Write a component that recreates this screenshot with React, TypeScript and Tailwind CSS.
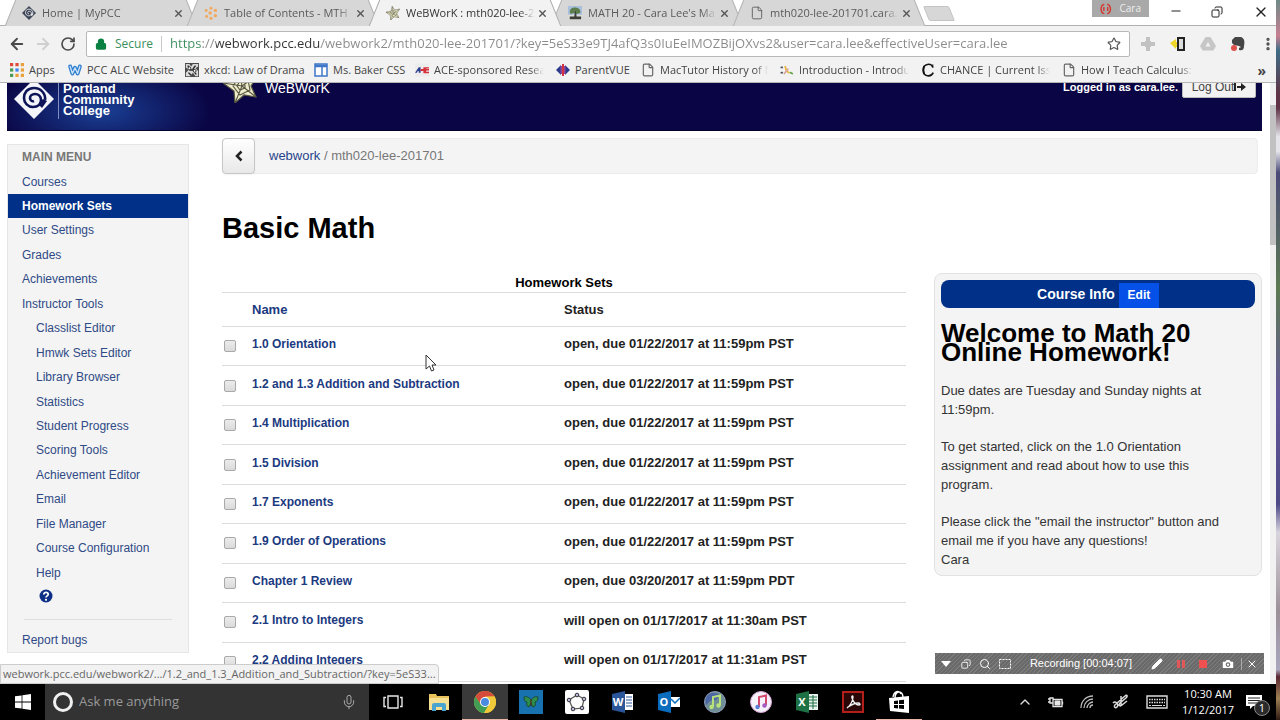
import type { ReactNode } from 'react'
import {
  ArrowLeft,
  ArrowRight,
  Camera,
  ChevronUp,
  Copy,
  File,
  Lock,
  Mic,
  Minus,
  MoreVertical,
  Pencil,
  RotateCw,
  Search,
  Star,
  X,
} from 'lucide-react'

const topMenu = ['Courses', 'Homework Sets', 'User Settings', 'Grades', 'Achievements', 'Instructor Tools']

const toolsMenu = [
  'Classlist Editor',
  'Hmwk Sets Editor',
  'Library Browser',
  'Statistics',
  'Student Progress',
  'Scoring Tools',
  'Achievement Editor',
  'Email',
  'File Manager',
  'Course Configuration',
  'Help',
]

const homeworkSets = [
  { name: '1.0 Orientation', status: 'open, due 01/22/2017 at 11:59pm PST' },
  { name: '1.2 and 1.3 Addition and Subtraction', status: 'open, due 01/22/2017 at 11:59pm PST' },
  { name: '1.4 Multiplication', status: 'open, due 01/22/2017 at 11:59pm PST' },
  { name: '1.5 Division', status: 'open, due 01/22/2017 at 11:59pm PST' },
  { name: '1.7 Exponents', status: 'open, due 01/22/2017 at 11:59pm PST' },
  { name: '1.9 Order of Operations', status: 'open, due 01/22/2017 at 11:59pm PST' },
  { name: 'Chapter 1 Review', status: 'open, due 03/20/2017 at 11:59pm PDT' },
  { name: '2.1 Intro to Integers', status: 'will open on 01/17/2017 at 11:30am PST' },
  { name: '2.2 Adding Integers', status: 'will open on 01/17/2017 at 11:31am PST' },
]

const fade = '[mask-image:linear-gradient(to_right,black_88%,transparent)]'

/* ---------- small drawings ---------- */

function PccMark({ dark }: { dark?: boolean }) {
  return (
    <svg viewBox="0 0 40 40" className="size-full">
      <path d="M20 0 40 20 20 40 0 20Z" fill={dark ? '#3d4658' : '#f4f5fb'} />
      <path
        d="M31 21c1-6-4-12-11-12s-10 5-10 10 4 9 9 9 8-3 8-7-3-6-6-6-5 2-5 4 2 4 4 3"
        fill="none"
        stroke={dark ? '#e8e8e8' : '#0d1458'}
        strokeWidth="2.600"
      />
      <path d="M25 24l4-4 4 2-5 7-3-3Z" fill={dark ? '#e8e8e8' : '#0d1458'} />
    </svg>
  )
}

function WebStar() {
  return (
    <svg viewBox="0 0 36 36" className="size-full">
      <path d="M16 1 22 10 35 8 28 19 33 30 21 28 12 36 11 24 0 16 13 13Z" fill="#eeeccb" stroke="#555540" strokeWidth="1.2" />
      <path
        d="M19 19 16 1M19 19 35 8M19 19 33 30M19 19 12 36M19 19 0 16M16 10l9 3 2 10-10 5-7-9ZM17 14l5 2v5l-5 2-3-4Z"
        fill="none"
        stroke="#55553f"
        strokeWidth="1.1"
      />
    </svg>
  )
}

function OrangeDots() {
  return (
    <svg viewBox="0 0 16 16" className="size-full" fill="#f2a85c">
      <circle cx="7" cy="8" r="2" />
      <circle cx="8" cy="2.5" r="1.7" />
      <circle cx="13" cy="5" r="1.9" />
      <circle cx="13" cy="11" r="1.9" />
      <circle cx="8" cy="14" r="1.8" />
      <circle cx="3" cy="12" r="1.7" />
      <circle cx="2.5" cy="5" r="1.7" />
    </svg>
  )
}

function TreePhoto() {
  return (
    <svg viewBox="0 0 16 16" className="size-full">
      <path d="M0 0h16v16H0Z" fill="#a9c0dc" />
      <path d="M0 10h16v6H0Z" fill="#dcdcd6" />
      <path d="M2 7c0-5 5-6 8-5s5 3 4 6l-4 1-3-1-4 1Z" fill="#5e7d4c" />
      <path d="M8 6h1l1 7H7ZM2 12h13v3H2Z" fill="#3c3f3a" />
    </svg>
  )
}

function AppsGrid() {
  const fills = ['#dd4b39', '#dd4b39', '#e9a23b', '#4a9b54', '#4285f4', '#e9a23b', '#4a9b54', '#e9a23b', '#e9a23b']
  return (
    <svg viewBox="0 0 13 13" className="size-full">
      {fills.map((fill, i) => (
        <rect key={i} x={(i % 3) * 5} y={Math.floor(i / 3) * 5} width="3" height="3" fill={fill} />
      ))}
    </svg>
  )
}

function BlueW() {
  return (
    <svg viewBox="0 0 16 14" className="size-full" fill="none" strokeLinejoin="round" strokeLinecap="round">
      <path d="M2.500 3 5 11 8 4.500 11 11 13.500 3" stroke="#2f7fd0" strokeWidth="4.500" />
      <path d="M2.500 3 5 11 8 4.500 11 11 13.500 3" stroke="#cfe4f8" strokeWidth="1.500" />
    </svg>
  )
}

function ComicFace() {
  return (
    <svg viewBox="0 0 16 16" className="size-full">
      <path d="M0 0h16v16H0Z" fill="#4a4a4a" />
      <path d="M1 1h4l2 3 2-3h6v3l-3 2 3 3v6h-3l-3-4-3 4H1v-4l3-3-3-3Z" fill="#d9d9d9" />
      <path d="M3 3l3 3M12 3l-3 4M4 11l3 3M11 11l2 2M5 8h6" stroke="#222" strokeWidth="1.6" />
      <circle cx="5" cy="6" r="1.600" fill="#fff" stroke="#222" />
      <circle cx="11" cy="9" r="1.600" fill="#fff" stroke="#222" />
    </svg>
  )
}

function BlueLayout() {
  return (
    <svg viewBox="0 0 14 14" className="size-full" fill="none" stroke="#3f77c8" strokeWidth="1.500">
      <path d="M1 1h12v12H1Z" fill="#fff" />
      <path d="M1 3.500h12M8 4v9" />
      <path d="M1 2.500h12" strokeWidth="2" />
    </svg>
  )
}

function AceLogo() {
  return (
    <svg viewBox="0 0 15 14" className="size-full">
      <path d="M0 0h15v14H0Z" fill="#ececec" />
      <path d="M0 10 4 4h2v6H4V8H3l-1 2Z" fill="#2b3f8d" />
      <path d="M6 6h3v2H6ZM9 4h6v1.500h-3V6h3v1.500h-3V9h3v1.500H9Z" fill="#d5303b" />
    </svg>
  )
}

function ParentVue() {
  return (
    <svg viewBox="0 0 14 12" className="size-full">
      <path d="M5 1v10L0 6Z" fill="#2c3a8c" />
      <path d="M9 1v10l5-5Z" fill="#2c3a8c" />
      <path d="M4.500 2h1.500v8H4.500ZM8 2h1.500v8H8Z" fill="#8f4aa0" />
      <path d="M6 0h2v12H6Z" fill="#d4313f" />
    </svg>
  )
}

function ColorSwish() {
  return (
    <svg viewBox="0 0 16 12" className="size-full" fill="none" strokeLinecap="round" strokeWidth="2">
      <path d="M1.500 3h1M1.500 9h1" stroke="#4c5560" />
      <path d="M6 2c0 4 2 5 4 7" stroke="#e6b637" />
      <path d="M9 5 5 10" stroke="#dba6a0" />
      <path d="M12 9l2 1" stroke="#68a648" />
    </svg>
  )
}

function BigC() {
  return (
    <svg viewBox="0 0 14 16" className="size-full" fill="none" stroke="#111">
      <path d="M12.500 5C11 0 1.500 0 1.500 8s9 8.500 11.500 3" strokeWidth="1.800" />
      <path d="M2.500 3.500c-1 3-1 6 0 9" strokeWidth="2" />
      <path d="M12.500 1.500v4" strokeWidth="1" />
    </svg>
  )
}

function WindowsLogo() {
  return (
    <svg viewBox="0 0 16 16" className="size-4" fill="#fff">
      <path d="M0 2.300 6.600 1.400v6.200H0ZM7.400 1.300 16 0v7.600H7.400ZM0 8.400h6.600v6.200L0 13.700ZM7.400 8.400H16V16l-8.600-1.300Z" />
    </svg>
  )
}

function TaskView() {
  return (
    <svg viewBox="0 0 20 14" className="h-3.5 w-5" fill="none" stroke="#e8e8e8" strokeWidth="1.400">
      <path d="M5 1h10v12H5ZM3 2.500H1v9h2M17 2.500h2v9h-2" />
    </svg>
  )
}

function Folder() {
  return (
    <svg viewBox="0 0 22 20" className="h-5 w-[22px]">
      <path d="M1 2h7l1 2h12v14H1Z" fill="#e9c25c" />
      <path d="M1 6h20v12H1Z" fill="#f7df92" />
      <path d="M4 19v-6q0-2 2-2h10q2 0 2 2v6h-4v-4H8v4Z" fill="#49a5cf" />
    </svg>
  )
}

function ChromeLogo() {
  return (
    <svg viewBox="0 0 22 22" className="size-[22px]">
      <circle cx="11" cy="11" r="11" fill="#f0c93a" />
      <path d="M1.500 5.500A11 11 0 0 1 20.500 5.500L11 6 6.700 13.500Z" fill="#d64a3c" />
      <path d="M1.500 5.500A11 11 0 0 0 10 22l5-8.500-8.300 0Z" fill="#3f9d54" />
      <path d="M20.500 5.500H11l4.300 8L10 22A11 11 0 0 0 20.500 5.500Z" fill="#f0c93a" />
      <circle cx="11" cy="11" r="5" fill="#fff" />
      <circle cx="11" cy="11" r="4" fill="#4a8bdf" />
    </svg>
  )
}

function Butterfly() {
  return (
    <svg viewBox="0 0 24 24" className="size-6">
      <path d="M0 0h24v24H0Z" fill="#1972b0" />
      <path d="M12 10C10 7 7 6 5 7c0 3 1 5 3 5-1 2 0 5 2 5l2-4 2 4c2 0 3-3 2-5 2 0 3-2 3-5-2-1-5 0-7 3Z" fill="#2c8f4c" stroke="#1e4733" />
      <path d="M12 9v7" stroke="#473621" strokeWidth="1.500" />
    </svg>
  )
}

function GeoGebra() {
  return (
    <svg viewBox="0 0 24 24" className="size-6">
      <rect width="24" height="24" rx="2" fill="#fdfdfd" />
      <path d="M12 5 19 9l-2 9-9 1-4-9Z" fill="none" stroke="#555" strokeWidth="1.200" />
      <g fill="#b9b9e0" stroke="#333" strokeWidth="1">
        <circle cx="12" cy="5" r="1.800" />
        <circle cx="19" cy="9" r="1.800" />
        <circle cx="17" cy="18" r="1.800" />
        <circle cx="8" cy="19" r="1.800" />
        <circle cx="4" cy="10" r="1.800" />
      </g>
    </svg>
  )
}

function OfficeIcon({ letter, color, children }: { letter: string; color: string; children: ReactNode }) {
  return (
    <svg viewBox="0 0 22 22" className="size-[22px]">
      {children}
      <path d="M0 3 13 0v22L0 19Z" fill={color} />
      <text x="6" y="15" textAnchor="middle" fontSize="11" fontWeight="700" fill="#fff" className="font-['Open_Sans',sans-serif]">
        {letter}
      </text>
    </svg>
  )
}

function MusicDisc({ tone }: { tone: 'earth' | 'pink' }) {
  const pink = tone === 'pink'
  return (
    <svg viewBox="0 0 22 22" className="size-[22px]">
      <circle cx="11" cy="11" r="10.500" fill={pink ? '#f5f1fa' : '#6f8f96'} stroke={pink ? '#d7a5d6' : '#8d9ab8'} />
      {!pink && <path d="M3 5c4-4 9-4 13-1l-4 5-6 1-4 4c-1-3-1-6 1-9Z" fill="#4c66a6" />}
      <path
        d="M9 16V6l7-1.500V14"
        fill="none"
        stroke={pink ? '#d4486f' : '#b9e27a'}
        strokeWidth="2"
      />
      <circle cx="7.500" cy="16" r="2.200" fill={pink ? '#5a7fd6' : '#b9e27a'} />
      <circle cx="14.500" cy="14.500" r="2.200" fill={pink ? '#a25ac0' : '#b9e27a'} />
    </svg>
  )
}

function Acrobat() {
  return (
    <svg viewBox="0 0 22 22" className="size-[22px]" fill="none">
      <path d="M1 1h20v20H1Z" fill="#2a0606" stroke="#b3201c" strokeWidth="2" />
      <path d="M5 17c3-2 6-7 6-11 0-2-2-1-1 1 1 4 4 7 7 7 2 0 1-2-1-2-4 0-7 2-10 4Z" stroke="#f2f2f2" strokeWidth="1.300" />
    </svg>
  )
}

function StoreBag() {
  return (
    <svg viewBox="0 0 22 24" className="h-6 w-[22px]">
      <path d="M7 8c0-8 8-8 8 0M5 7c1-6 6-7 8-3" fill="none" stroke="#fff" strokeWidth="1.400" />
      <path d="M1 8 21 6v17L2 21Z" fill="#fff" />
      <path d="M6 11l4-.5V14H6ZM11 10.300l5-.5V14h-5ZM6 15h4v3.500L6 18ZM11 15h5v4l-5-.5Z" fill="#000" />
    </svg>
  )
}

function Mouse() {
  return (
    <svg viewBox="0 0 12 18" className="h-[18px] w-3">
      <path d="M1 1v14l3.500-3 2 5 2.500-1-2-5H11Z" fill="#fff" stroke="#333" />
    </svg>
  )
}

/* ---------- browser chrome ---------- */

type TabProps = { title: string; icon: ReactNode; active?: boolean }

function Tab({ title, icon, active }: TabProps) {
  const tone = active ? 'bg-[#f2f2f2] border-[#a8a8a8]' : 'bg-[#d7d7d7] border-[#b2b2b2]'
  return (
    <div className={`relative h-[26px] w-[182px] min-w-0 ${active ? 'z-10' : ''}`}>
      <span className={`absolute inset-y-0 left-0 w-3/5 -skew-x-[22deg] border-l ${tone}`} />
      <span className={`absolute inset-y-0 right-0 w-3/5 skew-x-[22deg] border-r ${tone}`} />
      {/* covers the inner seam of the two slanted halves */}
      <span className={`absolute inset-y-0 right-1/4 left-1/4 ${active ? 'bg-[#f2f2f2]' : 'bg-[#d7d7d7]'}`} />
      <div className={`relative flex h-full items-center pr-2 pl-3 ${active ? 'text-[#333]' : 'text-[#5a5a5a]'}`}>
        <span className="mr-1.5 size-[14px] shrink-0">{icon}</span>
        <span className={`flex-1 overflow-hidden text-[11px] whitespace-nowrap ${fade}`}>{title}</span>
        <button type="button" aria-label={`Close ${title}`} className="ml-0.5 text-[#555]">
          <X className="size-[11px]" strokeWidth={3} />
        </button>
      </div>
    </div>
  )
}

function TabStrip() {
  return (
    <div className="flex h-[26px] shrink-0 items-start border-b border-[#b0b0b0] bg-white pl-2.5">
      <Tab title="Home | MyPCC" icon={<PccMark dark />} />
      <Tab title="Table of Contents - MTH" icon={<OrangeDots />} />
      <Tab title="WeBWorK : mth020-lee-2" icon={<WebStar />} active />
      <Tab title="MATH 20 - Cara Lee's Ma" icon={<TreePhoto />} />
      <Tab title="mth020-lee-201701.cara." icon={<File className="size-[14px]" strokeWidth={1.5} />} />
      <button
        type="button"
        aria-label="New tab"
        className="mt-1.5 ml-1.5 h-[15px] w-[26px] skew-x-[22deg] rounded-xs border border-[#c4c4c4] bg-[#d7d7d7]"
      />
      <div className="ml-auto flex items-start text-[#222]">
        <button type="button" className="flex h-[17px] w-[57px] items-center gap-2 bg-[#a9a9a9] px-2 text-[10px] text-[#eee]">
          <svg viewBox="0 0 12 12" className="size-3" fill="none" stroke="#d23a32" strokeWidth="1.500">
            <path d="M4.500 1C0 2 0 10 4.500 11M7.500 1C12 2 12 10 7.500 11M4 4v4M8 4v4" />
          </svg>
          Cara
        </button>
        <button type="button" aria-label="Minimize" className="ml-5 flex h-6 w-[42px] justify-start pt-1">
          <Minus className="size-3.5" strokeWidth={2} />
        </button>
        <button type="button" aria-label="Restore" className="flex h-6 w-[42px] justify-start pt-1.5">
          <Copy className="size-3 -scale-x-100" strokeWidth={2} />
        </button>
        <button type="button" aria-label="Close" className="flex h-6 w-[23px] justify-start pt-1">
          <X className="size-4" strokeWidth={2} />
        </button>
      </div>
    </div>
  )
}

function AddressBar() {
  return (
    <div className="flex h-9 shrink-0 items-center bg-[#f2f2f2] pl-2">
      <button type="button" aria-label="Back" className="text-[#4a4a4a]">
        <ArrowLeft className="size-[18px]" strokeWidth={2.5} />
      </button>
      <button type="button" aria-label="Forward" className="ml-2 text-[#cfcfcf]">
        <ArrowRight className="size-[18px]" strokeWidth={2.5} />
      </button>
      <button type="button" aria-label="Reload" className="ml-2 text-[#4a4a4a]">
        <RotateCw className="size-4" strokeWidth={2.5} />
      </button>
      <div className="ml-2.5 flex h-[26px] min-w-0 flex-1 items-center rounded-xs border border-[#b8b8b8] bg-white px-2">
        <Lock className="size-3 fill-[#0b8043] text-[#0b8043]" strokeWidth={2.5} />
        <span className="ml-2 text-[12px] text-[#3b8f5e]">Secure</span>
        <span className="mx-2 h-4 w-px bg-[#c8c8c8]" />
        <input
          aria-label="Address"
          readOnly
          value="https://webwork.pcc.edu/webwork2/mth020-lee-201701/?key=5eS33e9TJ4afQ3s0IuEeIMOZBijOXvs2&user=cara.lee&effectiveUser=cara.lee"
          className="min-w-0 flex-1 bg-[linear-gradient(to_right,#3b8f5e_31px,#8a8a8a_31px,#8a8a8a_46px,#333_46px,#333_150px,#8a8a8a_150px)] bg-clip-text text-[13px] text-transparent outline-none"
        />
        <Star className="size-[14px] text-[#555]" strokeWidth={2} />
      </div>
      <div className="ml-2.5 flex items-center gap-3.5">
        <svg viewBox="0 0 16 16" className="size-4" fill="#c2c2c2">
          <path d="M6 1h4v4H6ZM6 11h4v4H6ZM1 6h4v4H1ZM11 6h4v4h-4ZM5 5h6v6H5Z" />
        </svg>
        <svg viewBox="0 0 16 16" className="size-4">
          <path d="M0 7 6 3v3h4v5H6v2Z" fill="#efd629" />
          <path d="M8 2h6v12H8Z" fill="#ddd" stroke="#222" strokeWidth="2" />
        </svg>
        <svg viewBox="0 0 16 16" className="size-4">
          <path d="M5.500 1h5L16 10l-2.500 4.500h-11L0 10Z" fill="#c6c6c6" />
          <path d="M8 6 5.500 10.500h5Z" fill="#f2f2f2" />
        </svg>
        <svg viewBox="0 0 16 16" className="size-4">
          <path d="M2 4 5 1h6c3 1 4 4 3 9 0 4-2 5-5 4v-2l2-1-2-1-5-1-2-2Z" fill="#454545" />
          <circle cx="4" cy="12" r="3" fill="#e0514c" />
        </svg>
        <MoreVertical className="size-4 text-[#4a4a4a]" strokeWidth={3} />
      </div>
    </div>
  )
}

const doc = <File className="size-[14px] text-[#666]" strokeWidth={2} />

const bookmarks = [
  { title: 'Apps', icon: <AppsGrid />, width: 'w-[27px]' },
  { title: 'PCC ALC Website', icon: <BlueW />, width: 'w-[86px]' },
  { title: 'xkcd: Law of Drama', icon: <ComicFace />, width: 'w-[98px]' },
  { title: 'Ms. Baker CSS', icon: <BlueLayout />, width: 'w-[70px]' },
  { title: 'ACE-sponsored Resea', icon: <AceLogo />, width: 'w-[110px]', long: true },
  { title: 'ParentVUE', icon: <ParentVue />, width: 'w-[54px]' },
  { title: 'MacTutor History of M', icon: doc, width: 'w-[108px]', long: true },
  { title: 'Introduction - Introdu', icon: <ColorSwish />, width: 'w-[110px]', long: true },
  { title: 'CHANCE | Current Issu', icon: <BigC />, width: 'w-[110px]', long: true },
  { title: 'How I Teach Calculus:', icon: doc, width: 'w-[112px]', long: true },
]

function BookmarksBar() {
  return (
    <nav className="flex h-[21px] shrink-0 items-center gap-3 border-b border-[#b5b5b5] bg-[#f2f2f2] pr-2.5 pb-1 pl-2.5 text-[11px] text-[#444]">
      {bookmarks.map((b) => (
        <a key={b.title} href="#" className="flex shrink-0 items-center gap-[5px]">
          <span className="size-[14px] shrink-0">{b.icon}</span>
          <span className={`whitespace-nowrap ${b.width} ${b.long ? `overflow-hidden ${fade}` : ''}`}>{b.title}</span>
        </a>
      ))}
      <span className="ml-auto text-[14px] font-bold">»</span>
    </nav>
  )
}

/* ---------- page ---------- */

function Banner() {
  return (
    <header className="flex h-12 shrink-0 items-start overflow-hidden border-b border-[#03022a] bg-[#0a0544] bg-[radial-gradient(ellipse_110px_50px_at_95px_28px,#1a3f94,#0a0544)] text-white">
      <div className="-mt-1 flex w-[216px] items-start pl-[7px]">
        <div className="size-10">
          <PccMark />
        </div>
        <span className="mt-1 ml-1 h-9 w-px bg-[#7f8fc4]" />
        <p className="mt-1 ml-1 text-[13px] leading-[11px] font-extrabold">
          Portland
          <br />
          Community
          <br />
          College
        </p>
      </div>
      <div className="-mt-4 size-9">
        <WebStar />
      </div>
      <p className="-mt-1 ml-1.5 text-[14px] leading-[18px]">WeBWorK</p>
      <p className="-mt-1 ml-auto text-[11px] leading-4 font-bold">Logged in as cara.lee.</p>
      <button
        type="button"
        className="-mt-2 mr-1.5 ml-1 flex h-[23px] w-[74px] items-center justify-center rounded-xs border border-[#bbb] bg-[#f2f2f2] text-[12px] text-[#444]"
      >
        Log Out
        <svg viewBox="0 0 12 10" className="h-2.5 w-3" fill="#222">
          <path d="M0 1h2v8H0ZM3 4h4V1l5 4-5 4V6H3Z" />
        </svg>
      </button>
    </header>
  )
}

function Sidebar() {
  return (
    <nav className="w-[182px] shrink-0 self-start border border-[#e6e6e6] bg-[#f4f4f4] text-[12px] text-[#2f4a86]">
      <ul className="grid min-h-[171px] auto-rows-fr">
        <li className="flex items-center px-3.5 font-bold text-[#777]">MAIN MENU</li>
        {topMenu.map((item) => (
          <li key={item} className="grid">
            <a
              href="#"
              className={`flex items-center px-3.5 ${item === 'Homework Sets' ? 'bg-[#003087] font-bold text-white' : ''}`}
            >
              {item}
            </a>
          </li>
        ))}
      </ul>
      <ul className="grid min-h-[269px] auto-rows-fr">
        {toolsMenu.map((item) => (
          <li key={item} className="flex items-center pl-7">
            <a href="#">{item}</a>
          </li>
        ))}
      </ul>
      <a href="#" aria-label="Help page" className="mt-1 ml-[31px] block size-3.5">
        <svg viewBox="0 0 14 14" className="size-3.5">
          <circle cx="7" cy="7" r="6.500" fill="#0d2f86" />
          <path d="M4.800 5.500c0-3 4.600-2.800 4.400 0C9.100 7 7 6.800 7 8.600" fill="none" stroke="#fff" strokeWidth="1.800" />
          <circle cx="7" cy="10.800" r="1.100" fill="#fff" />
        </svg>
      </a>
      <hr className="mx-4 mt-4 border-[#dedede]" />
      <a href="#" className="mt-2 block px-3.5 leading-6">
        Report bugs
      </a>
    </nav>
  )
}

function Breadcrumb() {
  return (
    <div className="mr-3 flex h-9 items-center rounded-sm border border-[#ececec] bg-[#f4f4f4] text-[13px]">
      <button
        type="button"
        aria-label="Up one level"
        className="-ml-px flex h-9 w-[33px] items-center justify-center rounded-sm border border-[#c6c6c6] bg-linear-to-b from-white to-[#e8e8e8] shadow-xs"
      >
        <svg viewBox="0 0 10 12" className="h-3 w-2.5" fill="none" stroke="#222" strokeWidth="2.500">
          <path d="M7.500 1.500 3 6l4.500 4.500" />
        </svg>
      </button>
      <p className="ml-3.5 text-[#777]">
        <a href="#" className="text-[#26448a]">
          webwork
        </a>{' '}
        / <span>mth020-lee-201701</span>
      </p>
    </div>
  )
}

function SetsTable() {
  return (
    <table className="h-[390px] min-w-0 flex-1 table-fixed border-collapse text-left text-[13px] font-bold text-[#222]">
      <caption className="h-[22px] pt-1 leading-[18px] font-bold text-black">Homework Sets</caption>
      <colgroup>
        <col className="w-[30px]" />
        <col className="w-[312px]" />
        <col />
      </colgroup>
      <thead>
        <tr className="h-[34px] border-y border-[#dcdcdc]">
          <th aria-label="Select" />
          <th>
            <a href="#" className="text-[#1b3a80]">
              Name
            </a>
          </th>
          <th>Status</th>
        </tr>
      </thead>
      <tbody>
        {homeworkSets.map((set, i) => (
          <tr key={set.name} className="border-b border-[#dcdcdc]">
            <td className="pl-0.5">
              <input
                type="checkbox"
                aria-labelledby={`set-${i}`}
                className="block size-3 appearance-none rounded-xs border border-[#a9a9a9] bg-linear-to-b from-[#ececec] to-[#dadada]"
              />
            </td>
            <td className="pb-1 text-[12px]">
              <a id={`set-${i}`} href="#" className="text-[#1b3a80]">
                {set.name}
              </a>
            </td>
            <td className="pb-1">{set.status}</td>
          </tr>
        ))}
      </tbody>
    </table>
  )
}

function CourseInfo() {
  return (
    <aside className="mt-[3px] w-[328px] shrink-0 self-start rounded-lg border border-[#e2e2e2] bg-[#f4f4f4] p-1.5 text-[13px] leading-[19px] text-[#333]">
      <h2 className="flex h-7 items-end justify-center gap-1 rounded-lg bg-[#003087] text-[14px] leading-7 font-bold text-white">
        Course Info
        <button type="button" className="h-[25px] w-10 bg-[#0550e6] text-[12px] leading-[25px]">
          Edit
        </button>
      </h2>
      <h1 className="mt-4 text-[26px] leading-[19px] font-bold text-black">
        Welcome to Math 20
        <br />
        Online Homework!
      </h1>
      <p className="mt-[19px]">
        Due dates are Tuesday and Sunday nights at
        <br />
        11:59pm.
      </p>
      <p className="mt-[18px]">
        To get started, click on the 1.0 Orientation
        <br />
        assignment and read about how to use this
        <br />
        program.
      </p>
      <p className="mt-[18px]">
        Please click the "email the instructor" button and
        <br />
        email me if you have any questions!
        <br />
        Cara
      </p>
    </aside>
  )
}

function RecorderBar() {
  return (
    <div className="absolute right-3 bottom-2.5 flex h-[21px] w-[329px] items-center bg-[repeating-linear-gradient(135deg,#6a6a6a_0,#6a6a6a_2px,#7c7c7c_2px,#7c7c7c_3px)] px-1.5 text-white">
      <button type="button" aria-label="Menu">
        <svg viewBox="0 0 10 6" className="h-1.5 w-2.5" fill="#fff">
          <path d="M0 0h10L5 6Z" />
        </svg>
      </button>
      <button type="button" aria-label="Windows" className="ml-2.5">
        <Copy className="size-2.5 -scale-x-100" strokeWidth={2} />
      </button>
      <button type="button" aria-label="Zoom" className="ml-2">
        <Search className="size-3" strokeWidth={2} />
      </button>
      <button type="button" aria-label="Region" className="ml-2">
        <svg viewBox="0 0 12 10" className="h-2.5 w-3" fill="none" stroke="#fff" strokeDasharray="2 1">
          <path d="M.5.5h11v9H.5Z" />
        </svg>
      </button>
      <span className="flex-1 text-center text-[11px]">Recording [00:04:07]</span>
      <button type="button" aria-label="Draw">
        <Pencil className="size-3 fill-white" strokeWidth={2} />
      </button>
      <button type="button" aria-label="Pause" className="ml-3.5 flex gap-0.5">
        <span className="h-2 w-[3px] bg-[#e25757]" />
        <span className="h-2 w-[3px] bg-[#e25757]" />
      </button>
      <button type="button" aria-label="Stop" className="ml-3.5 size-2 bg-[#f05050]" />
      <button type="button" aria-label="Snapshot" className="ml-3.5">
        <Camera className="size-[14px] fill-white stroke-[#707070]" strokeWidth={2} />
      </button>
      <button type="button" aria-label="Close recorder" className="ml-1.5 border-l border-[#aaa] pl-1">
        <X className="size-3" strokeWidth={2} />
      </button>
    </div>
  )
}

function PageView() {
  return (
    <main className="relative min-h-0 flex-1 overflow-hidden bg-white font-['Liberation_Sans',Arial,sans-serif]">
      <div className="mr-3.5 ml-[7px]">
        <Banner />
        <div className="flex gap-[33px]">
          <div className="pt-[13px]">
            <Sidebar />
          </div>
          <div className="min-w-0 flex-1 pt-[7px]">
            <div className="-mr-2">
              <Breadcrumb />
            </div>
            <h1 className="mt-9 text-[29px] leading-9 font-bold text-black">Basic Math</h1>
            <div className="mt-6 flex items-start gap-7">
              <SetsTable />
              <CourseInfo />
            </div>
          </div>
        </div>
      </div>

      <div className="absolute inset-y-0 right-0 w-1.5 bg-[#f1f1f1] pt-[22px]">
        <div className="h-[140px] bg-[#c1c1c1]" />
      </div>
      <div className="absolute top-[271px] left-[425px]">
        <Mouse />
      </div>
      <p className="absolute bottom-0 left-0 h-5 rounded-tr-sm border border-[#ccc] bg-[#f2f2f2] px-0.5 font-['Open_Sans',sans-serif] text-[11px] leading-[18px] whitespace-nowrap text-[#666]">
        webwork.pcc.edu/webwork2/.../1.2_and_1.3_Addition_and_Subtraction/?key=5eS33...
      </p>
      <RecorderBar />
    </main>
  )
}

/* ---------- taskbar ---------- */

const pinned = [
  { name: 'Task View', icon: <TaskView /> },
  { name: 'File Explorer', icon: <Folder /> },
  { name: 'Chrome', icon: <ChromeLogo />, state: 'border-b border-[#e8b4a6] bg-[#3a3a3a]' },
  { name: 'Butterfly', icon: <Butterfly /> },
  { name: 'GeoGebra', icon: <GeoGebra /> },
  {
    name: 'Word',
    icon: (
      <OfficeIcon letter="W" color="#2a5699">
        <path d="M12 3h9v16h-9Z" fill="#fff" />
        <path d="M14 6h6M14 9h6M14 12h6M14 15h6" stroke="#2a5699" />
      </OfficeIcon>
    ),
  },
  {
    name: 'Outlook',
    icon: (
      <OfficeIcon letter="O" color="#0a6cbd">
        <path d="M12 6h10v10H12Z" fill="#fff" />
        <path d="M13 8l4 4 5-5" fill="none" stroke="#0a6cbd" strokeWidth="1.500" />
      </OfficeIcon>
    ),
  },
  { name: 'Music', icon: <MusicDisc tone="earth" /> },
  { name: 'iTunes', icon: <MusicDisc tone="pink" /> },
  {
    name: 'Excel',
    icon: (
      <OfficeIcon letter="X" color="#1e7145">
        <path d="M12 3h10v16H12Z" fill="#e8f2ec" />
        <path d="M13 6h8M13 9h8M13 12h8M13 15h8M17 4v14" stroke="#1e7145" />
      </OfficeIcon>
    ),
  },
  { name: 'Acrobat', icon: <Acrobat /> },
  { name: 'Store', icon: <StoreBag />, state: 'border-b border-[#e8b4a6]' },
]

function Taskbar() {
  return (
    <footer className="flex h-9 shrink-0 items-stretch bg-black text-white">
      <button type="button" aria-label="Start" className="flex w-[45px] items-center justify-center">
        <WindowsLogo />
      </button>
      <div className="mr-px flex w-[324px] items-center bg-[#333] pr-3 pl-2">
        <span className="size-5 shrink-0 rounded-full border-[3px] border-[#f0f0f0]" />
        <input
          aria-label="Search"
          placeholder="Ask me anything"
          className="ml-1.5 min-w-0 flex-1 bg-transparent text-[13px] outline-none placeholder:text-[#9a9a9a]"
        />
        <Mic className="size-4 text-[#aaa]" strokeWidth={1.5} />
      </div>
      {pinned.map((app) => (
        <button
          key={app.name}
          type="button"
          aria-label={app.name}
          className={`flex w-[46px] items-center justify-center ${app.state ?? ''}`}
        >
          {app.icon}
        </button>
      ))}
      <div className="ml-auto flex items-center pr-1.5">
        <ChevronUp className="size-4 text-[#ddd]" strokeWidth={2} />
        <svg viewBox="0 0 16 12" className="ml-[15px] h-3 w-4" fill="none" stroke="#e6e6e6">
          <path d="M5 3.500h9v7H5ZM14.500 5.500v3M0 3h2M0 6h2M2 2h3v5H2Z" strokeWidth="1.300" />
          <path d="M7 5h5v4H7Z" fill="#e6e6e6" />
        </svg>
        <svg viewBox="0 0 14 14" className="ml-4 size-3.5" fill="none" stroke="#bbb" strokeWidth="1.300">
          <path d="M1 13C1 6 6 1 13 1M4 13c0-5 4-9 9-9M7 13c0-3 3-6 6-6M10 13c0-2 1-3 3-3" />
        </svg>
        <svg viewBox="0 0 16 16" className="ml-[18px] size-4" fill="none" stroke="#ddd" strokeWidth="1.500">
          <path d="M1 9c3-3 6 2 4 4s-4-1-1-3l9-8c2-2 3 0 1 2l-6 5c-2 2 0 4 2 2l5-4M9 2v9" />
        </svg>
        <svg viewBox="0 0 22 14" className="ml-[18px] h-3.5 w-[22px]" fill="none" stroke="#ddd">
          <path d="M1 1h20v12H1Z" strokeWidth="1.400" />
          <path d="M3 4.500h16M3 7.500h16" strokeWidth="1.500" strokeDasharray="1.500 1" />
          <path d="M3 10.500h2M6 10.500h10M17 10.500h2" />
        </svg>
        <p className="ml-3.5 w-[52px] text-center text-[11px] leading-4 whitespace-nowrap">
          10:30 AM
          <br />
          1/12/2017
        </p>
        <button type="button" aria-label="Notifications" className="relative ml-3 size-6">
          <svg viewBox="0 0 16 16" className="size-4">
            <path d="M0 1h16v11H7l-3 3v-3H0Z" fill="#fff" />
            <path d="M2 4h12M2 6.500h12M2 9h9" stroke="#222" />
          </svg>
          <span className="absolute top-2.5 left-2 flex size-4 items-center justify-center rounded-full border border-[#888] bg-[#2a2a2a] text-[11px]">
            1
          </span>
        </button>
      </div>
    </footer>
  )
}

export default function App() {
  return (
    <div className="flex h-screen overflow-hidden bg-white font-['Open_Sans','Noto_Sans',sans-serif]">
      <div className="flex min-w-0 flex-1 flex-col">
        <TabStrip />
        <AddressBar />
        <BookmarksBar />
        <PageView />
        <Taskbar />
      </div>
      {/* sliver of the desktop behind the window */}
      <div className="w-1 shrink-0 bg-[linear-gradient(to_bottom,#6d8a86_0,#c77f92_5%,#3f6d86_7%,#5f3345_13%,#5f3345_15%,#e4e4ea_19%,#e4e4ea_21%,#4a4a78_24%,#5d7a52_40%,#64589a_55%,#4d4a86_70%,#d9d4de_74%,#9c9098_85%,#a9a7be_93%,#5a2630_94%,#9c7e52_97%,#2e1a12_100%)]" />
    </div>
  )
}
